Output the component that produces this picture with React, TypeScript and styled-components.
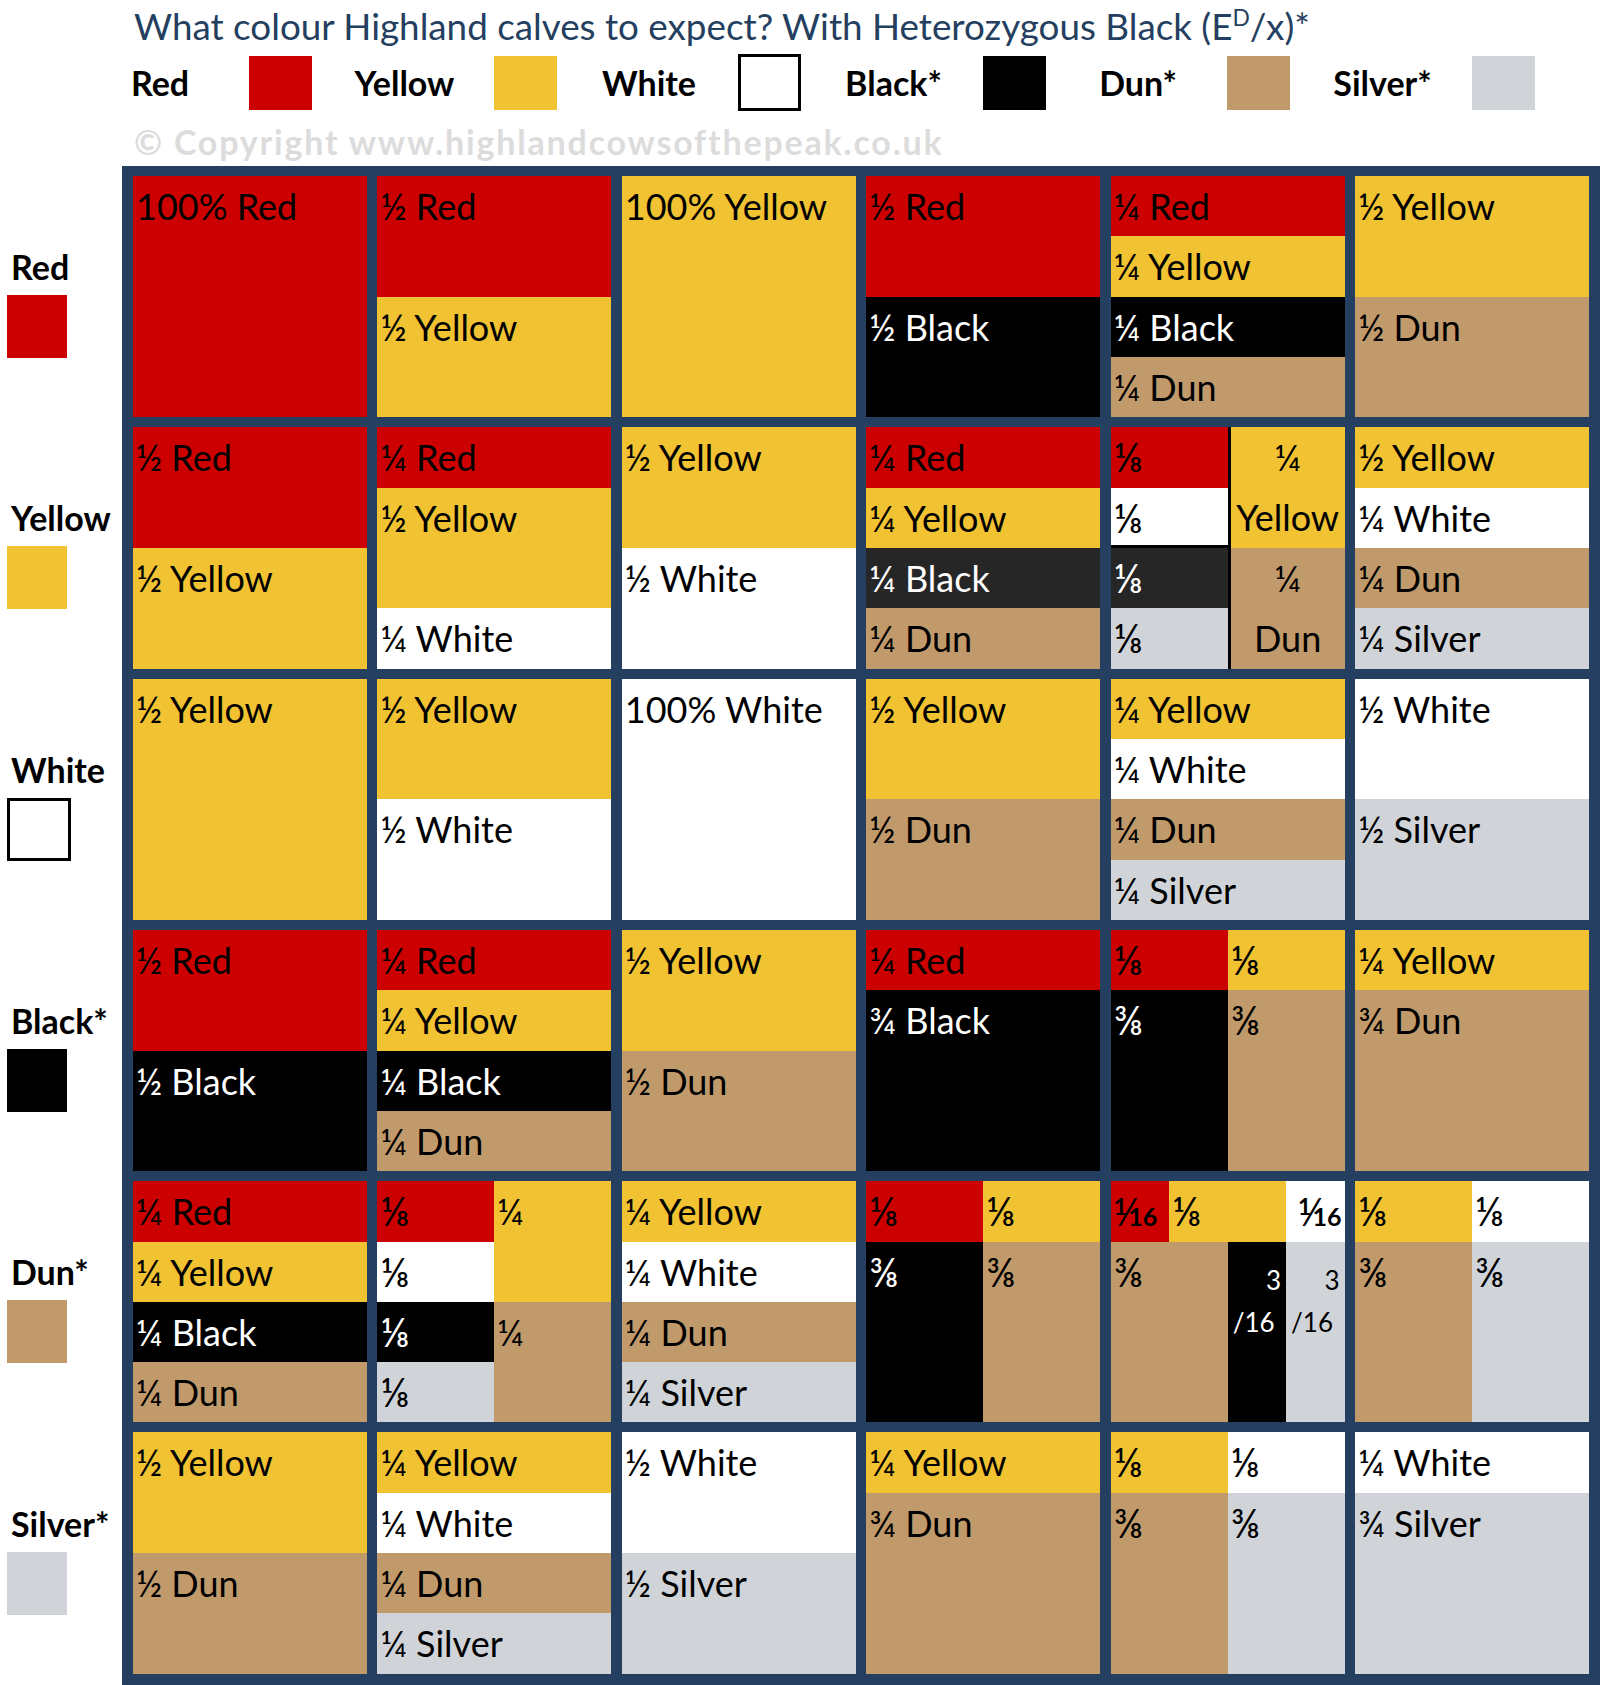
import React from 'react';
import styled, { createGlobalStyle } from 'styled-components';

const COLORS = {
  red: '#CC0000',
  yellow: '#F1C232',
  white: '#FFFFFF',
  black: '#000000',
  dark: '#262626',
  dun: '#C19A6B',
  silver: '#D0D4D9',
} as const;
type ColorKey = keyof typeof COLORS;

const NAVY = '#243F60';
const FONT = `"Lato", "Noto Sans", "DejaVu Sans", sans-serif`;

const GlobalStyle = createGlobalStyle`
  html, body { margin: 0; padding: 0; background: #ffffff; }
  body { font-family: ${FONT}; color: #000; }
  * { box-sizing: border-box; }
`;

const Page = styled.div`
  width: 1600px;
  height: 1685px;
  overflow: hidden;
  background: #fff;
`;

const Header = styled.header`
  display: flex;
  flex-direction: column;
  height: 166px;
`;

const Title = styled.h1`
  margin: 0;
  padding: 6px 0 0 134px;
  height: 45px;
  font-weight: 400;
  font-size: 36.8px;
  line-height: 40px;
  color: ${NAVY};
  white-space: nowrap;
`;

const Sup = styled.sup`
  font-size: 0.62em;
  vertical-align: 0.62em;
  line-height: 0;
`;

const LegendRow = styled.div`
  margin: 9px 0 0 71px;
  width: 1467px;
  height: 54px;
  display: grid;
  grid-template-columns: repeat(6, 1fr);
`;

const LegendItem = styled.div`
  display: flex;
  align-items: center;
`;

const LegendLabel = styled.span`
  width: 178px;
  text-align: center;
  font-weight: 700;
  font-size: 34px;
  line-height: 54px;
`;

const Swatch = styled.div<{ $color: string; $outlined?: boolean; $w: number; $h: number }>`
  flex: none;
  width: ${(p) => p.$w}px;
  height: ${(p) => p.$h}px;
  background: ${(p) => p.$color};
  border: ${(p) => (p.$outlined ? '3px solid #000' : 'none')};
`;

const Copyright = styled.div`
  margin: 16px 0 0 134px;
  font-weight: 700;
  font-size: 34px;
  letter-spacing: 1.8px;
  line-height: 36px;
  color: #dcdcdc;
  white-space: nowrap;
`;

const Main = styled.main`
  display: flex;
  align-items: flex-start;
`;

const SideLegend = styled.aside`
  width: 122px;
  flex: none;
  padding-top: 10px;
  display: grid;
  grid-template-rows: repeat(6, 241.3px);
  row-gap: 10px;
`;

const SideItem = styled.div`
  display: flex;
  flex-direction: column;
  justify-content: center;
  align-items: flex-start;
  padding: 12px 0 0 7px;
  gap: 8px;
`;

const SideLabel = styled.span`
  font-weight: 700;
  font-size: 34px;
  line-height: 40px;
  padding-left: 4px;
`;

const Board = styled.section`
  width: 1478px;
  height: 1519px;
  flex: none;
  background: ${NAVY};
  padding: 10px 11px 11px 11px;
  display: grid;
  grid-template-columns: repeat(6, 1fr);
  grid-template-rows: repeat(6, 241.3px);
  column-gap: 10.6px;
  row-gap: 10px;
`;

const Cell = styled.div`
  display: grid;
  grid-template-columns: repeat(4, 1fr);
  grid-template-rows: repeat(4, 1fr);
  overflow: hidden;
  min-width: 0;
`;

const Band = styled.div<{
  $bg: string;
  $fg: string;
  $c: number;
  $cs: number;
  $r: number;
  $rs: number;
  $bl?: boolean;
  $bb?: boolean;
}>`
  grid-column: ${(p) => p.$c} / span ${(p) => p.$cs};
  grid-row: ${(p) => p.$r} / span ${(p) => p.$rs};
  background: ${(p) => p.$bg};
  color: ${(p) => p.$fg};
  border-left: ${(p) => (p.$bl ? '3px solid #000' : 'none')};
  border-bottom: ${(p) => (p.$bb ? '3px solid #000' : 'none')};
  min-width: 0;
  min-height: 0;
  overflow: hidden;
  display: flex;
  flex-direction: column;
`;

const Line = styled.div<{ $align: 'left' | 'center' | 'right'; $frac?: boolean }>`
  height: 60px;
  flex: none;
  line-height: 60px;
  font-size: ${(p) => (p.$frac ? '40px' : '36px')};
  padding: 0 3px;
  text-align: ${(p) => p.$align};
  white-space: nowrap;
`;

const Wrapped = styled.div`
  padding-top: 17px;
  font-size: 26px;
  line-height: 42px;
`;

const WrapLine = styled.div<{ $align: 'left' | 'right' }>`
  text-align: ${(p) => p.$align};
  padding: 0 5px;
  white-space: nowrap;
`;

const Frac = styled.span`
  display: inline-flex;
  align-items: baseline;
  font-size: 38px;
`;
const FracNum = styled.span`
  font-size: 0.6em;
  position: relative;
  top: -0.5em;
  font-weight: 700;
`;
const FracSlash = styled.span`
  font-size: 1em;
  margin: 0 -2px;
`;
const FracDen = styled.span`
  font-size: 0.66em;
  font-weight: 700;
`;

type LineSpec = { t: React.ReactNode; a?: 'left' | 'center' | 'right' };
type BandSpec = {
  bg: ColorKey;
  c: number;
  cs: number;
  r: number;
  rs: number;
  lines?: LineSpec[];
  wrap?: boolean;
  bl?: boolean;
  bb?: boolean;
};
type StackItem = [ColorKey, number, React.ReactNode?, Partial<BandSpec>?];

const sixteenth = (
  <Frac>
    <FracNum>1</FracNum>
    <FracSlash>⁄</FracSlash>
    <FracDen>16</FracDen>
  </Frac>
);

function stack(items: StackItem[], c = 1, cs = 4): BandSpec[] {
  let r = 1;
  return items.map(([bg, q, text, extra]) => {
    const b: BandSpec = { bg, c, cs, r, rs: q, lines: text ? [{ t: text }] : undefined, ...(extra || {}) };
    r += q;
    return b;
  });
}

function split(left: StackItem[], right: StackItem[]): BandSpec[] {
  return [...stack(left, 1, 2), ...stack(right, 3, 2)];
}

const R: ColorKey = 'red';
const Y: ColorKey = 'yellow';
const W: ColorKey = 'white';
const K: ColorKey = 'black';
const D: ColorKey = 'dark';
const N: ColorKey = 'dun';
const S: ColorKey = 'silver';

const centred = (a: string, b: string): Partial<BandSpec> => ({
  lines: [
    { t: a, a: 'center' },
    { t: b, a: 'center' },
  ],
  bl: true,
});

const ROWS: BandSpec[][][] = [
  [
    stack([[R, 4, '100% Red']]),
    stack([[R, 2, '½ Red'], [Y, 2, '½ Yellow']]),
    stack([[Y, 4, '100% Yellow']]),
    stack([[R, 2, '½ Red'], [K, 2, '½ Black']]),
    stack([[R, 1, '¼ Red'], [Y, 1, '¼ Yellow'], [K, 1, '¼ Black'], [N, 1, '¼ Dun']]),
    stack([[Y, 2, '½ Yellow'], [N, 2, '½ Dun']]),
  ],
  [
    stack([[R, 2, '½ Red'], [Y, 2, '½ Yellow']]),
    stack([[R, 1, '¼ Red'], [Y, 2, '½ Yellow'], [W, 1, '¼ White']]),
    stack([[Y, 2, '½ Yellow'], [W, 2, '½ White']]),
    stack([[R, 1, '¼ Red'], [Y, 1, '¼ Yellow'], [D, 1, '¼ Black'], [N, 1, '¼ Dun']]),
    split(
      [[R, 1, '⅛'], [W, 1, '⅛', { bb: true }], [D, 1, '⅛'], [S, 1, '⅛']],
      [[Y, 2, undefined, centred('¼', 'Yellow')], [N, 2, undefined, centred('¼', 'Dun')]]
    ),
    stack([[Y, 1, '½ Yellow'], [W, 1, '¼ White'], [N, 1, '¼ Dun'], [S, 1, '¼ Silver']]),
  ],
  [
    stack([[Y, 4, '½ Yellow']]),
    stack([[Y, 2, '½ Yellow'], [W, 2, '½ White']]),
    stack([[W, 4, '100% White']]),
    stack([[Y, 2, '½ Yellow'], [N, 2, '½ Dun']]),
    stack([[Y, 1, '¼ Yellow'], [W, 1, '¼ White'], [N, 1, '¼ Dun'], [S, 1, '¼ Silver']]),
    stack([[W, 2, '½ White'], [S, 2, '½ Silver']]),
  ],
  [
    stack([[R, 2, '½ Red'], [K, 2, '½ Black']]),
    stack([[R, 1, '¼ Red'], [Y, 1, '¼ Yellow'], [K, 1, '¼ Black'], [N, 1, '¼ Dun']]),
    stack([[Y, 2, '½ Yellow'], [N, 2, '½ Dun']]),
    stack([[R, 1, '¼ Red'], [K, 3, '¾ Black']]),
    split([[R, 1, '⅛'], [K, 3, '⅜']], [[Y, 1, '⅛'], [N, 3, '⅜']]),
    stack([[Y, 1, '¼ Yellow'], [N, 3, '¾ Dun']]),
  ],
  [
    stack([[R, 1, '¼ Red'], [Y, 1, '¼ Yellow'], [K, 1, '¼ Black'], [N, 1, '¼ Dun']]),
    split(
      [[R, 1, '⅛'], [W, 1, '⅛'], [K, 1, '⅛'], [S, 1, '⅛']],
      [[Y, 2, '¼'], [N, 2, '¼']]
    ),
    stack([[Y, 1, '¼ Yellow'], [W, 1, '¼ White'], [N, 1, '¼ Dun'], [S, 1, '¼ Silver']]),
    split([[R, 1, '⅛'], [K, 3, '⅜']], [[Y, 1, '⅛'], [N, 3, '⅜']]),
    [
      { bg: R, c: 1, cs: 1, r: 1, rs: 1, lines: [{ t: sixteenth }] },
      { bg: Y, c: 2, cs: 2, r: 1, rs: 1, lines: [{ t: '⅛' }] },
      { bg: W, c: 4, cs: 1, r: 1, rs: 1, lines: [{ t: sixteenth, a: 'right' }] },
      { bg: N, c: 1, cs: 2, r: 2, rs: 3, lines: [{ t: '⅜' }] },
      { bg: K, c: 3, cs: 1, r: 2, rs: 3, wrap: true },
      { bg: S, c: 4, cs: 1, r: 2, rs: 3, wrap: true },
    ],
    split([[Y, 1, '⅛'], [N, 3, '⅜']], [[W, 1, '⅛'], [S, 3, '⅜']]),
  ],
  [
    stack([[Y, 2, '½ Yellow'], [N, 2, '½ Dun']]),
    stack([[Y, 1, '¼ Yellow'], [W, 1, '¼ White'], [N, 1, '¼ Dun'], [S, 1, '¼ Silver']]),
    stack([[W, 2, '½ White'], [S, 2, '½ Silver']]),
    stack([[Y, 1, '¼ Yellow'], [N, 3, '¾ Dun']]),
    split([[Y, 1, '⅛'], [N, 3, '⅜']], [[W, 1, '⅛'], [S, 3, '⅜']]),
    stack([[W, 1, '¼ White'], [S, 3, '¾ Silver']]),
  ],
];

const LEGEND: { name: string; color: ColorKey }[] = [
  { name: 'Red', color: 'red' },
  { name: 'Yellow', color: 'yellow' },
  { name: 'White', color: 'white' },
  { name: 'Black*', color: 'black' },
  { name: 'Dun*', color: 'dun' },
  { name: 'Silver*', color: 'silver' },
];

const isDark = (k: ColorKey) => k === 'black' || k === 'dark';
const isFracOnly = (t: React.ReactNode) => typeof t === 'string' && (t === '⅛' || t === '⅜');

function BandView({ b }: { b: BandSpec }) {
  return (
    <Band
      $bg={COLORS[b.bg]}
      $fg={isDark(b.bg) ? '#fff' : '#000'}
      $c={b.c}
      $cs={b.cs}
      $r={b.r}
      $rs={b.rs}
      $bl={b.bl}
      $bb={b.bb}
    >
      {b.lines?.map((l, i) => (
        <Line key={i} $align={l.a || 'left'} $frac={isFracOnly(l.t)}>
          {l.t}
        </Line>
      ))}
      {b.wrap && (
        <Wrapped>
          <WrapLine $align="right">3</WrapLine>
          <WrapLine $align="left">/16</WrapLine>
        </Wrapped>
      )}
    </Band>
  );
}

export default function App() {
  return (
    <>
      <GlobalStyle />
      <Page>
        <Header>
          <Title>
            What colour Highland calves to expect? With Heterozygous Black (E<Sup>D</Sup>/x)*
          </Title>
          <LegendRow>
            {LEGEND.map((l) => (
              <LegendItem key={l.name}>
                <LegendLabel>{l.name}</LegendLabel>
                <Swatch
                  $color={COLORS[l.color]}
                  $outlined={l.color === 'white'}
                  $w={63}
                  $h={l.color === 'white' ? 57 : 54}
                />
              </LegendItem>
            ))}
          </LegendRow>
          <Copyright>© Copyright www.highlandcowsofthepeak.co.uk</Copyright>
        </Header>
        <Main>
          <SideLegend>
            {LEGEND.map((l) => (
              <SideItem key={l.name}>
                <SideLabel>{l.name}</SideLabel>
                <Swatch
                  $color={COLORS[l.color]}
                  $outlined={l.color === 'white'}
                  $w={l.color === 'white' ? 64 : 60}
                  $h={63}
                />
              </SideItem>
            ))}
          </SideLegend>
          <Board>
            {ROWS.map((row, ri) =>
              row.map((cell, ci) => (
                <Cell key={`${ri}-${ci}`}>
                  {cell.map((b, bi) => (
                    <BandView key={bi} b={b} />
                  ))}
                </Cell>
              ))
            )}
          </Board>
        </Main>
      </Page>
    </>
  );
}
